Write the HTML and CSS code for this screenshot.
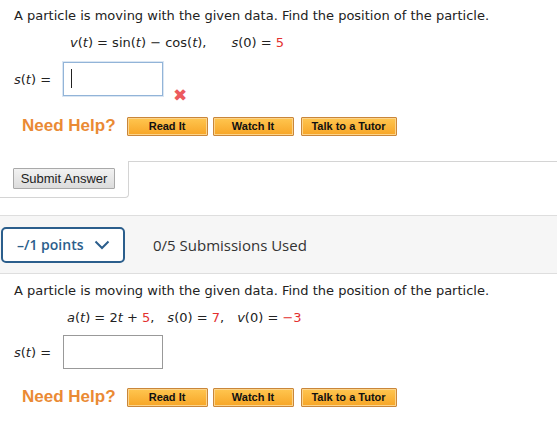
FILE: index.html
```html
<!DOCTYPE html>
<html lang="en">
  <head>
    <meta charset="UTF-8" />
    <title>Particle Position</title>
    <link rel="stylesheet" href="styles.css">
  </head>
  <body>
    <div class="question">
      <p class="prompt">A particle is moving with the given data. Find the position of the particle.</p>
      <div class="equation">
        <i>v</i>(<i>t</i>) = sin(<i>t</i>) &minus; cos(<i>t</i>),<span class="sep wide"></span><i>s</i>(0) = <span class="given">5</span>
      </div>
      <div class="answer-row">
        <span class="answer-label"><i>s</i>(<i>t</i>) = </span>
        <div class="answer-box focused"><span class="caret"></span></div>
        <span class="wrong">&#10006;</span>
      </div>
      <div class="help-row">
        <span class="need-help">Need Help?</span>
        <button class="help-btn">Read It</button>
        <button class="help-btn">Watch It</button>
        <button class="help-btn">Talk to a Tutor</button>
      </div>
    </div>

    <div class="submit-area">
      <div class="submit-tab">
        <button class="submit-btn">Submit Answer</button>
      </div>
      <div class="submit-rest"></div>
    </div>

    <div class="points-bar">
      <button class="points-btn">
        &ndash;/1 points
        <svg width="16" height="10" viewBox="0 0 16 10"><path d="M1.5 1.5 L8 8 L14.5 1.5" fill="none" stroke="#2b5e8c" stroke-width="2"/></svg>
      </button>
      <span class="submissions">0/5 Submissions Used</span>
    </div>

    <div class="question second">
      <p class="prompt">A particle is moving with the given data. Find the position of the particle.</p>
      <div class="equation">
        <i>a</i>(<i>t</i>) = 2<i>t</i> + <span class="given">5</span>,<span class="sep"></span><i>s</i>(0) = <span class="given">7</span>,<span class="sep"></span><i>v</i>(0) = <span class="given">&minus;3</span>
      </div>
      <div class="answer-row">
        <span class="answer-label"><i>s</i>(<i>t</i>) = </span>
        <div class="answer-box"></div>
      </div>
      <div class="help-row">
        <span class="need-help">Need Help?</span>
        <button class="help-btn">Read It</button>
        <button class="help-btn">Watch It</button>
        <button class="help-btn">Talk to a Tutor</button>
      </div>
    </div>
  </body>
</html>
```

FILE: styles.css
```css
body {
  margin: 0;
  background: white;
  font-family: "DejaVu Sans", Verdana, sans-serif;
  color: #222;
  overflow: hidden;
}
.question {
  padding: 7px 0 0 14px;
  font-size: 13px;
}
.prompt {
  margin: 0;
  line-height: 18px;
}
.equation {
  margin: 9px 0 0 56px;
  line-height: 18px;
}
.equation .sep {
  display: inline-block;
  width: 13px;
}
.equation .sep.wide {
  width: 25px;
}
.given {
  color: #e3302f;
}
.answer-row {
  display: flex;
  align-items: center;
  margin-top: 10px;
}
.answer-label {
  width: 49px;
}
.answer-box {
  width: 98px;
  height: 32px;
  border: 1px solid #999;
  background: white;
}
.answer-box.focused {
  border-color: #92b4d8;
  box-shadow: 0 0 0 1px #dae6f3;
}
.caret {
  display: block;
  width: 1px;
  height: 19px;
  margin: 6px 0 0 7px;
  background: #222;
}
.wrong {
  align-self: flex-end;
  margin: 0 0 -8px 10px;
  color: #ec5a5e;
  font-size: 17px;
  font-weight: bold;
  line-height: 17px;
}
.help-row {
  display: flex;
  align-items: center;
  margin: 20px 0 0 8px;
  height: 20px;
}
.need-help {
  font-family: "Liberation Sans", Arial, sans-serif;
  font-weight: bold;
  font-size: 17px;
  color: #ea8a34;
  margin-right: 11px;
}
.help-btn {
  font-family: "Liberation Sans", Arial, sans-serif;
  font-weight: bold;
  font-size: 11px;
  color: #111;
  height: 19px;
  padding: 0;
  margin-right: 5px;
  width: 81px;
  background: linear-gradient(#ffc650, #f7a526);
  border: 1px solid #c9863a;
  box-shadow: inset 0 0 0 1px #fcd48a;
  border-radius: 1px;
}
.help-btn:last-child {
  width: 96px;
  margin-left: 2px;
}
.submit-area {
  display: flex;
  margin-top: 25px;
}
.submit-tab {
  width: 129px;
  height: 37px;
  padding: 7px 0 0 13px;
  box-sizing: border-box;
  border-right: 1px solid #d4d4d4;
  border-bottom: 1px solid #d4d4d4;
  border-bottom-right-radius: 4px;
}
.submit-rest {
  flex: 1;
  border-top: 1px solid #d4d4d4;
}
.submit-btn {
  font-family: "Liberation Sans", Arial, sans-serif;
  font-size: 13px;
  color: #222;
  height: 21px;
  width: 102px;
  padding: 0;
  background: linear-gradient(#f2f2f2, #dcdcdc);
  border: 1px solid #a9a9a9;
  border-radius: 1px;
}
.points-bar {
  display: flex;
  align-items: center;
  margin-top: 17px;
  height: 57px;
  background: #f6f6f6;
  border-top: 1px solid #dedede;
  border-bottom: 1px solid #dedede;
  font-family: "Open Sans", sans-serif;
}
.points-btn {
  display: flex;
  align-items: center;
  gap: 10px;
  margin-left: 1px;
  width: 124px;
  height: 36px;
  padding: 0 0 0 14px;
  background: white;
  border: 2px solid #2b5e8c;
  border-radius: 5px;
  font-family: "Open Sans", sans-serif;
  font-weight: 600;
  font-size: 14px;
  color: #2b5e8c;
}
.submissions {
  margin-left: 28px;
  font-size: 15px;
  color: #333;
}
.question.second {
  padding-top: 8px;
}
.second .equation {
  margin-left: 53px;
}
.second .answer-row {
  margin-top: 8px;
}
.second .help-row {
  margin-top: 18px;
}
```
